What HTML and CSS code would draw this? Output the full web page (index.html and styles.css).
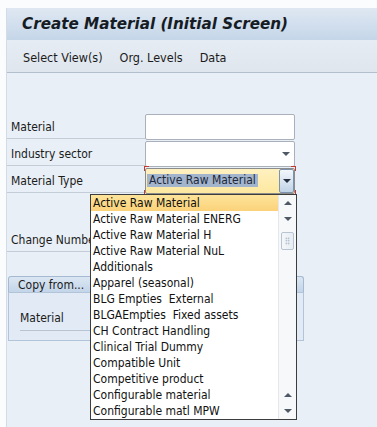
FILE: index.html
```html
<!DOCTYPE html>
<html>
<head>
<meta charset="utf-8">
<link rel="stylesheet" href="styles.css">
</head>
<body>
<div class="window">
  <div class="titlebar"><h1 class="title">Create Material (Initial Screen)</h1></div>
  <div class="toolbar">
    <span class="tb">Select View(s)</span>
    <span class="tb">Org. Levels</span>
    <span class="tb">Data</span>
  </div>
  <div class="content">
    <div class="form">
      <div class="row">
        <div class="label">Material</div>
        <div class="input"></div>
      </div>
      <div class="row">
        <div class="label">Industry sector</div>
        <div class="input"><span class="arrow-down plain"></span></div>
      </div>
      <div class="row">
        <div class="label">Material Type</div>
        <div class="input focused">
          <span class="sel">Active Raw Material</span>
          <span class="ddbtn"><span class="arrow-down dark"></span></span>
          <span class="corner tl"></span><span class="corner tr"></span>
          <span class="corner bl"></span><span class="corner br"></span>
        </div>
      </div>
      <div class="row gap">
        <div class="label">Change Number</div>
      </div>
    </div>
    <div class="group">
      <div class="group-head">Copy from...</div>
      <div class="group-body">
        <div class="glabel">Material</div>
      </div>
    </div>
    <div class="popup">
      <ul class="list">
        <li class="item hl">Active Raw Material</li>
        <li class="item">Active Raw Material ENERG</li>
        <li class="item">Active Raw Material H</li>
        <li class="item">Active Raw Material NuL</li>
        <li class="item">Additionals</li>
        <li class="item">Apparel (seasonal)</li>
        <li class="item">BLG Empties&nbsp; External</li>
        <li class="item">BLGAEmpties&nbsp; Fixed assets</li>
        <li class="item">CH Contract Handling</li>
        <li class="item">Clinical Trial Dummy</li>
        <li class="item">Compatible Unit</li>
        <li class="item">Competitive product</li>
        <li class="item">Configurable material</li>
        <li class="item">Configurable matl MPW</li>
      </ul>
      <div class="scroll">
        <div class="sbtn"><span class="arrow-up"></span></div>
        <div class="sbtn"><span class="arrow-down"></span></div>
        <div class="thumb"><span class="grip"></span></div>
        <div class="sfill"></div>
        <div class="sbtn"><span class="arrow-up"></span></div>
        <div class="sbtn"><span class="arrow-down"></span></div>
      </div>
    </div>
  </div>
</div>
</body>
</html>
```

FILE: styles.css
```css
html, body {
  margin: 0;
  padding: 0;
  background: #fbfcfd;
  height: 100%;
  overflow: hidden;
}
body {
  font-family: "DejaVu Sans Condensed", "DejaVu Sans", "Liberation Sans", sans-serif;
  font-stretch: condensed;
  font-size: 12px;
  color: #1b1b1b;
}
.window {
  margin: 8px 0 0 6px;
  border-left: 1px solid #d3dbe5;
  background: #e9eff6;
  height: 419px;
}
.titlebar {
  height: 32px;
  background: linear-gradient(#dfe8f2, #c5d6e9);
  padding-left: 15px;
}
.title {
  margin: 0;
  font-family: "DejaVu Sans", sans-serif;
  font-stretch: normal;
  font-weight: bold;
  font-style: italic;
  font-size: 15.2px;
  line-height: 33px;
  color: #161c24;
}
.toolbar {
  height: 30px;
  padding-top: 2px;
  background: linear-gradient(#e6ecf3, #dfe6ee);
  border-bottom: 1px solid #b3bfcd;
  padding-left: 16px;
  display: flex;
  align-items: center;
  gap: 17px;
  font-size: 12.5px;
}
.content {
  position: relative;
  padding-top: 39px;
}
.row {
  display: flex;
  align-items: flex-start;
  height: 27px;
}
.row.gap {
  margin-top: 32px;
}
.label {
  width: 134px;
  height: 26px;
  padding-left: 4px;
  border-bottom: 1px solid #c4ccd7;
  line-height: 31px;
}
.input {
  position: relative;
  box-sizing: border-box;
  margin-top: 2px;
  width: 150px;
  height: 26px;
  background: #fff;
  border: 1px solid #a9b0ba;
  border-radius: 2px;
}
.input.focused {
  background: linear-gradient(#fff1c0, #fde8a0);
  border-color: #8c8c8c;
}
.sel {
  position: absolute;
  left: 1px;
  top: 5px;
  height: 13px;
  line-height: 13px;
  padding: 0 2px;
  background: #a3b5cd;
  color: #1d2838;
  font-size: 12px;
}
.ddbtn {
  position: absolute;
  right: 0;
  top: 0;
  width: 15px;
  height: 24px;
  box-sizing: border-box;
  border: 1px solid #7c92ad;
  border-radius: 2px;
  background: linear-gradient(#f3f7fc, #c0d2e6);
  display: flex;
  align-items: center;
  justify-content: center;
}
.arrow-down, .arrow-up {
  display: block;
  width: 0;
  height: 0;
  border-left: 4px solid transparent;
  border-right: 4px solid transparent;
}
.arrow-down { border-top: 4px solid #4f5865; }
.arrow-up { border-bottom: 4px solid #4f5865; }
.arrow-down.dark { border-top-color: #24303f; }
.input .plain {
  position: absolute;
  right: 4px;
  top: 10px;
}
.corner {
  position: absolute;
  width: 4px;
  height: 4px;
  border: 0 solid #c23a2e;
}
.corner.tl { left: -2px; top: -3px; border-left-width: 1px; border-top-width: 1px; }
.corner.tr { right: -2px; top: -3px; border-right-width: 1px; border-top-width: 1px; }
.corner.bl { left: -2px; bottom: -2px; border-left-width: 1px; border-bottom-width: 1px; }
.corner.br { right: -2px; bottom: -2px; border-right-width: 1px; border-bottom-width: 1px; }

.group {
  margin: 24px 0 0 1px;
  width: 296px;
}
.group-head {
  height: 15px;
  line-height: 17px;
  padding-left: 9px;
  background: linear-gradient(#dbe6f2, #c3d5e9);
  border: 1px solid #a5bad2;
  border-bottom: none;
  border-radius: 3px 3px 0 0;
}
.group-body {
  height: 35px;
  padding: 12px 0 0 11px;
  background: #e1eaf5;
  border: 1px solid #b2c4d8;
}
.glabel {
  width: 120px;
  height: 25px;
  line-height: 27px;
  border-bottom: 1px solid #b9c4d2;
}

.popup {
  position: absolute;
  left: 83px;
  top: 121px;
  width: 205px;
  height: 224px;
  border: 1px solid #3d3d3d;
  background: #fff;
  display: flex;
}
.list {
  list-style: none;
  margin: 0;
  padding: 0;
  width: 187px;
}
.item {
  height: 16px;
  line-height: 16px;
  padding-left: 2px;
  white-space: nowrap;
  color: #111;
}
.item.hl {
  background: linear-gradient(#fde49a, #fbd27a);
}
.scroll {
  width: 17px;
  border-left: 1px solid #e4e8ed;
  background: #f7f8fa;
  display: flex;
  flex-direction: column;
}
.sbtn {
  height: 16px;
  display: flex;
  align-items: center;
  justify-content: center;
}
.thumb {
  margin: 5px 2px 0 2px;
  height: 18px;
  box-sizing: border-box;
  border: 1px solid #b8c4d2;
  border-radius: 2px;
  background: linear-gradient(90deg, #f4f7fa, #e7edf3);
  display: flex;
  align-items: center;
  justify-content: center;
}
.grip {
  width: 5px;
  height: 8px;
  background-image: radial-gradient(circle, #9aa8b8 0.7px, transparent 0.9px);
  background-size: 2.5px 2.5px;
}
.sfill {
  flex: 1;
}
```
